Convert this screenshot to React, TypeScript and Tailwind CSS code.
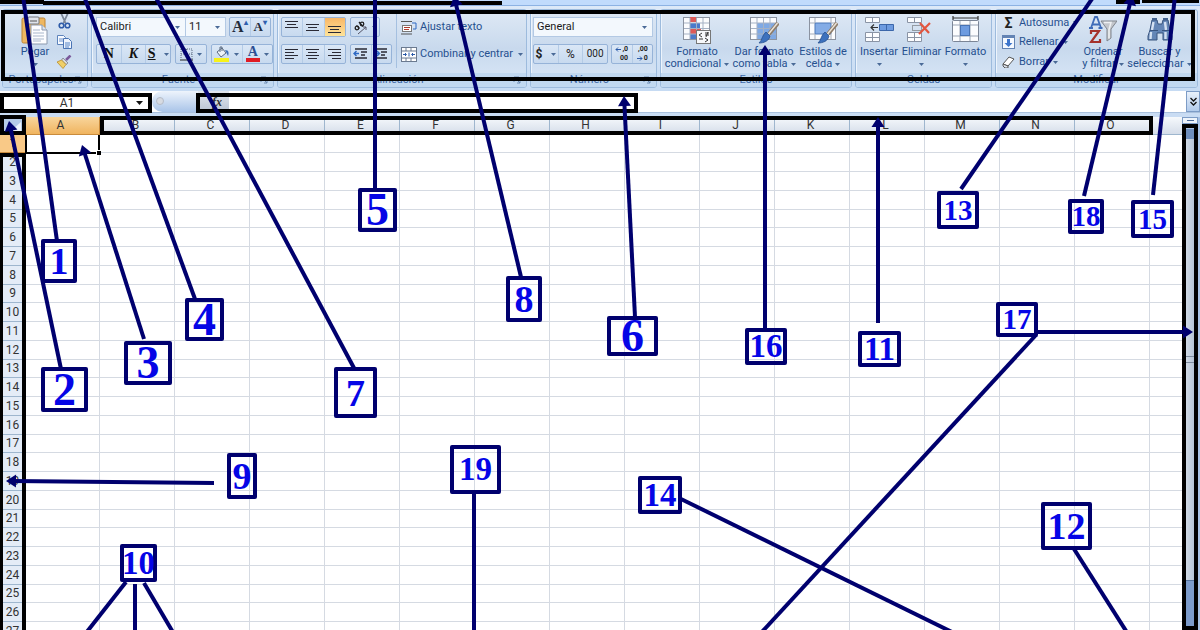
import React from 'react';

const columns = ['A', 'B', 'C', 'D', 'E', 'F', 'G', 'H', 'I', 'J', 'K', 'L', 'M', 'N', 'O'];
const rows = Array.from({ length: 27 }, (_, i) => i + 1);

const INK = '#00006e';

type Line = { x1: number; y1: number; x2: number; y2: number; arrow?: boolean };

const lines: Line[] = [
  { x1: 57, y1: 241, x2: 23, y2: -4 },
  { x1: 61, y1: 369, x2: 9, y2: 121, arrow: true },
  { x1: 144, y1: 339, x2: 82, y2: 145, arrow: true },
  { x1: 195, y1: 299, x2: 84, y2: -4 },
  { x1: 354, y1: 368, x2: 155, y2: -4 },
  { x1: 375, y1: 189, x2: 375, y2: -4 },
  { x1: 521, y1: 277, x2: 454, y2: -4, arrow: true },
  { x1: 635, y1: 317, x2: 624, y2: 96, arrow: true },
  { x1: 765, y1: 329, x2: 765, y2: 45, arrow: true },
  { x1: 878, y1: 323, x2: 878, y2: 117, arrow: true },
  { x1: 961, y1: 189, x2: 1094, y2: -4 },
  { x1: 1084, y1: 196, x2: 1132, y2: -5, arrow: true },
  { x1: 1153, y1: 195, x2: 1175, y2: -4 },
  { x1: 1035, y1: 332, x2: 1193, y2: 332, arrow: true },
  { x1: 1036, y1: 335, x2: 760, y2: 634 },
  { x1: 214, y1: 483, x2: 6, y2: 481, arrow: true },
  { x1: 126, y1: 582, x2: 86, y2: 633 },
  { x1: 135, y1: 584, x2: 135, y2: 634 },
  { x1: 144, y1: 583, x2: 174, y2: 634 },
  { x1: 474, y1: 493, x2: 474, y2: 634 },
  { x1: 681, y1: 499, x2: 956, y2: 634 },
  { x1: 1074, y1: 549, x2: 1128, y2: 634 },
];

const S = 'text-[29px]';
const M = 'text-[33px]';
const L = 'text-[38px]';
const XL = 'text-[46px]';

const callouts = [
  { n: 1, x: 41, y: 239, w: 36, h: 44, size: L },
  { n: 2, x: 41, y: 367, w: 47, h: 45, size: XL },
  { n: 3, x: 124, y: 341, w: 48, h: 44, size: XL },
  { n: 4, x: 185, y: 298, w: 39, h: 43, size: XL },
  { n: 5, x: 358, y: 188, w: 39, h: 44, size: XL },
  { n: 7, x: 334, y: 367, w: 43, h: 51, size: L },
  { n: 8, x: 506, y: 276, w: 36, h: 46, size: L },
  { n: 6, x: 607, y: 316, w: 51, h: 40, size: XL },
  { n: 16, x: 745, y: 328, w: 42, h: 37, size: M },
  { n: 11, x: 858, y: 331, w: 43, h: 36, size: M },
  { n: 13, x: 937, y: 191, w: 42, h: 38, size: S },
  { n: 18, x: 1068, y: 199, w: 36, h: 35, size: S },
  { n: 15, x: 1131, y: 200, w: 43, h: 38, size: S },
  { n: 17, x: 996, y: 302, w: 42, h: 35, size: S },
  { n: 9, x: 227, y: 453, w: 30, h: 46, size: L },
  { n: 10, x: 120, y: 544, w: 37, h: 38, size: M },
  { n: 19, x: 450, y: 445, w: 51, h: 49, size: M },
  { n: 14, x: 638, y: 476, w: 44, h: 38, size: M },
  { n: 12, x: 1041, y: 502, w: 51, h: 48, size: L },
];

function Caret() {
  return (
    <svg width="5" height="3" viewBox="0 0 5 3" className="shrink-0" aria-hidden="true">
      <path d="M0 0h5L2.5 3z" fill="#4a6a97" />
    </svg>
  );
}

function Group({ title, className, launcher, children }: {
  title: string;
  className: string;
  launcher?: boolean;
  children: React.ReactNode;
}) {
  return (
    <section
      aria-label={title}
      className={`flex h-[79px] flex-col overflow-hidden rounded-[3px] border border-[#9dbbdd] bg-linear-to-b from-[#dfe9f5] via-[#c8d9ed] to-[#dae8f8] shadow-[inset_1px_0_0_#edf4fc] ${className}`}
    >
      <div className="flex flex-1 items-start pt-[3px]">{children}</div>
      <div className="flex h-[14px] shrink-0 items-center bg-[#c1d8f0] px-[5px] text-[11px] leading-[14px] text-[#3e6aaa]">
        <span className="flex-1 text-center">{title}</span>
        {launcher && (
          <svg width="8" height="8" viewBox="0 0 8 8" aria-hidden="true">
            <path d="M1 6V1h5M3 3l4 4M7 4v3H4" fill="none" stroke="#6f8db5" />
          </svg>
        )}
      </div>
    </section>
  );
}

// Large ribbon button: picture on top, two text lines below
function BigButton({ icon, line1, line2, className }: {
  icon: React.ReactNode;
  line1: string;
  line2?: string;
  className: string;
}) {
  return (
    <button type="button" className={`flex shrink-0 flex-col items-center whitespace-nowrap text-[11px] leading-[12px] text-[#26508f] ${className}`}>
      <span className="flex h-[33px] items-center">{icon}</span>
      <span>{line1}</span>
      <span className="flex h-[12px] items-center gap-[3px]">
        {line2}
        <Caret />
      </span>
    </button>
  );
}

function ButtonBox({ className, children }: { className?: string; children: React.ReactNode }) {
  return (
    <div className={`flex h-[20px] shrink-0 items-stretch divide-x divide-[#b4cbe6] rounded-[2px] border border-[#96b3d8] bg-linear-to-b from-[#dae7f6] to-[#c8daef] ${className ?? ''}`}>
      {children}
    </div>
  );
}

function IconButton({ label, active, className, children }: {
  label: string;
  active?: boolean;
  className?: string;
  children: React.ReactNode;
}) {
  return (
    <button
      type="button"
      aria-label={label}
      className={`flex flex-1 items-center justify-center gap-1 ${active ? 'bg-linear-to-b from-[#f9b766] to-[#fde39a]' : ''} ${className ?? ''}`}
    >
      {children}
    </button>
  );
}

function Picker({ label, options, className }: { label: string; options: string[]; className: string }) {
  return (
    <div className={`relative h-[20px] shrink-0 border border-[#b3c9e4] bg-[#f3f8fd] ${className}`}>
      <select aria-label={label} className="block h-full w-full appearance-none bg-transparent pl-[3px] text-[11px] leading-[18px] text-[#1b1b1b]">
        {options.map((o) => (
          <option key={o}>{o}</option>
        ))}
      </select>
      <span className="pointer-events-none absolute top-2 right-[5px]">
        <Caret />
      </span>
    </div>
  );
}

function AlignIcon({ bars, y = 1 }: { bars: [number, number][]; y?: number }) {
  return (
    <svg width="14" height="14" viewBox="0 0 14 14" aria-hidden="true">
      {bars.map(([x, w], i) => (
        <rect key={i} x={x} y={y + i * 3} width={w} height="1" fill="#2a2a35" />
      ))}
    </svg>
  );
}

function IndentIcon({ flip }: { flip?: boolean }) {
  return (
    <svg width="16" height="14" viewBox="0 0 16 14" aria-hidden="true">
      <path d="M2 2h12M8 5h6M8 8h4M2 11h12" stroke="#2a2a35" strokeWidth="1.4" />
      <path d={flip ? 'M1 6.5h5M4 4l2.500 2.500L4 9' : 'M6 6.500H1M3.500 4L1 6.500L3.500 9'} fill="none" stroke="#2f6ac4" strokeWidth="1.4" />
    </svg>
  );
}

function DecimalIcon({ less }: { less?: boolean }) {
  return (
    <svg width="6" height="5" viewBox="0 0 6 5" aria-hidden="true">
      <path d={less ? 'M0 2.5h5M3 .5l2 2-2 2' : 'M6 2.5H1M3 .5l-2 2 2 2'} fill="none" stroke="#2b5ba9" />
    </svg>
  );
}

function PasteIcon() {
  return (
    <svg width="28" height="30" viewBox="0 0 28 30" aria-hidden="true">
      <rect x="1" y="3" width="23" height="25" rx="1.500" fill="#eeb761" stroke="#bd8536" />
      <rect x="7" y="2" width="11" height="7" rx="1" fill="#dfe3ea" stroke="#73777f" />
      <path d="M9 6h7" stroke="#555" />
      <path d="M10 10h11l5 5v14H10z" fill="#fdfdff" stroke="#8b98ad" />
      <path d="M21 10v5h5" fill="#dbe4ef" stroke="#8b98ad" />
      <path d="M12 15h7M12 18h11M12 21h11M12 24h11M12 26h8" stroke="#a9b7cb" />
    </svg>
  );
}

function CutIcon() {
  return (
    <svg width="15" height="16" viewBox="0 0 15 16" aria-hidden="true">
      <path d="M4 0l4.500 10M11 0L6.500 10" stroke="#7b8798" strokeWidth="1.800" />
      <circle cx="4.500" cy="12.500" r="2.300" fill="none" stroke="#2d5ba8" strokeWidth="1.600" />
      <circle cx="10.500" cy="12.500" r="2.300" fill="none" stroke="#2d5ba8" strokeWidth="1.600" />
    </svg>
  );
}

function CopyIcon() {
  return (
    <svg width="15" height="14" viewBox="0 0 15 14" aria-hidden="true">
      <path d="M.5.5h6l2 2v7h-8z" fill="#f7faff" stroke="#5d83bb" />
      <path d="M2 4h4M2 6h4" stroke="#6a91cc" />
      <path d="M6.500 3.500h5l3 3v7h-8z" fill="#eef4fd" stroke="#4a74b4" />
      <path d="M8 8h5M8 10h5M8 12h4" stroke="#5784c6" />
    </svg>
  );
}

function BrushIcon() {
  return (
    <svg width="15" height="14" viewBox="0 0 15 14" aria-hidden="true">
      <path d="M13.500.5L9 5" stroke="#7b5a9b" strokeWidth="2.500" />
      <path d="M6 3l5 5-2 1.500L4.500 5z" fill="#d8dbe0" stroke="#7b7f88" strokeWidth=".8" />
      <path d="M4.500 5L9 9.500 6 13.500 0 7z" fill="#f0cf68" stroke="#b98d2b" strokeWidth=".8" />
    </svg>
  );
}

// Shared base for the three style pictures
function TableIcon({ kind }: { kind: 'cond' | 'table' | 'cell' }) {
  return (
    <svg width="29" height="30" viewBox="0 0 29 30" aria-hidden="true">
      <rect x=".5" y="2.500" width="26" height="22" fill="#fbfcfe" stroke="#8b93a1" />
      {kind === 'cond' && (
        <>
          <path d="M7 2h6v5H7zM7 13h11v6H7z" fill="#dc5a58" />
          <path d="M7 8h10v5H7z" fill="#4a7acb" />
          <path d="M7 19h6v5H7z" fill="#4a7acb" />
        </>
      )}
      {kind === 'table' && <path d="M7 8h19v16H7z" fill="#7fa9e4" />}
      {kind === 'cell' && <path d="M6 8h16v11H6z" fill="#84ace6" stroke="#4d79b8" />}
      {kind === 'cell' ? (
        <path d="M6 3v5M22 3v5M6 19v5M22 19v5M1 8h5M1 19h5M22 8h4" stroke="#a5adba" />
      ) : (
        <path d="M7 3v21M13.500 3v21M20 3v21M1 8h25M1 13.500h25M1 19h25" stroke="#a5b1c4" />
      )}
      {kind === 'cond' ? (
        <>
          <rect x="13.500" y="15.500" width="14" height="13" fill="#f7f8fa" stroke="#777" />
          <path d="M19 18l-3 2 3 2M16 24h4M22 18h4M22 20h4M25 17l-2 5M22 23l3 2-3 2" fill="none" stroke="#333" />
        </>
      ) : (
        <>
          <path d="M28 8l-9 11" stroke="#8d7c68" strokeWidth="4" />
          <path d="M27.500 8l-9 11" stroke="#e9e2d8" strokeWidth="1.500" />
          <path d="M16 17l4 4c-1 5-6 7-11 7 3-2 3-8 7-11z" fill="#3d71bd" stroke="#27508f" strokeWidth=".8" />
        </>
      )}
    </svg>
  );
}

function CellsIcon({ kind }: { kind: 'insert' | 'delete' | 'format' }) {
  if (kind === 'format') {
    return (
      <svg width="29" height="30" viewBox="0 0 29 30" aria-hidden="true">
        <path d="M2 3h25M2 1v4M27 1v4" stroke="#333" strokeWidth="1.200" />
        <rect x="1.500" y="5.500" width="26" height="21" rx="1" fill="#fbfcfe" stroke="#7b8596" />
        <path d="M2 10h25M2 21h25M9 6v20M19 6v20" stroke="#9aa5b6" />
        <rect x="9.500" y="10.500" width="9" height="10" fill="#6d9be0" stroke="#4873b4" />
      </svg>
    );
  }
  return (
    <svg width="29" height="30" viewBox="0 0 29 30" aria-hidden="true">
      <path d="M.5 2.500h14v5H.500zM7.500 2.500v5M.5 17.500h14v9H.500zM7.500 17.500v9M.5 22.500h14" fill="#fcfdff" stroke="#8a94a5" />
      {kind === 'insert' ? (
        <>
          <path d="M14.500 9.500h14v6h-14z" fill="#6d9be0" stroke="#3c67aa" />
          <path d="M21.500 9.500v6" stroke="#3c67aa" />
          <path d="M13 12.500H6M9 9.500l-3 3 3 3" fill="none" stroke="#333" strokeWidth="1.200" />
        </>
      ) : (
        <>
          <path d="M5.500 10.500h9v5h-9z" fill="none" stroke="#555" strokeDasharray="1 1" />
          <path d="M13 8l9 10M23 8L12 19" stroke="#e2553f" strokeWidth="2.200" />
        </>
      )}
    </svg>
  );
}

function SortIcon() {
  return (
    <svg width="28" height="30" viewBox="0 0 28 30" aria-hidden="true">
      <path d="M12 6h16l-6 8v9l-4 3V14z" fill="#c3c6cb" stroke="#80858d" />
      <path d="M15 7.500h7l-2 7v9" fill="none" stroke="#eef0f2" strokeWidth="1.500" />
      <path d="M2 13L6 2h2l4 11M4 9.500h6M0 13h4M9.500 13h4" fill="none" stroke="#3f6cb8" strokeWidth="1.800" />
      <path d="M2 19v-3h8L2 27h9v-3" fill="none" stroke="#a5322d" strokeWidth="2.200" />
    </svg>
  );
}

function FindIcon() {
  return (
    <svg width="26" height="28" viewBox="0 0 26 28" aria-hidden="true">
      <path d="M5 4h5l1 4h4l1-4h5l2 10 2 6v4h-9v-7h-6v7H1v-4l2-6z" fill="#6486b6" stroke="#38547f" />
      <path d="M6.500 6L5 14M18 6l1 8M4 16l-.5 7M18.500 16v7" stroke="#d4e1f2" strokeWidth="2.400" />
      <path d="M3 14.500h8M15 14.500h8" stroke="#38547f" />
      <path d="M5 3h5M16 3h5" stroke="#42618e" strokeWidth="2" />
    </svg>
  );
}

function Ribbon() {
  return (
    <div className="flex gap-[3px] border-t border-[#8db2e3] bg-linear-to-b from-[#dde9f8] to-[#c6dbf3] px-[2px] pt-[3px] pb-[3px]">
      <Group title="Portapapeles" launcher className="w-[86px] shrink-0">
        <BigButton icon={<PasteIcon />} line1="Pegar" className="ml-[12px] w-[40px]" />
        <div className="flex flex-col items-center gap-[6px] pl-[2px]">
          <button type="button" aria-label="Cortar"><CutIcon /></button>
          <button type="button" aria-label="Copiar"><CopyIcon /></button>
          <button type="button" aria-label="Copiar formato"><BrushIcon /></button>
        </div>
      </Group>

      <Group title="Fuente" launcher className="w-[183px] shrink-0">
        <div className="flex flex-col gap-[7px] pt-[4px] pl-[4px]">
          <div className="flex">
            <Picker label="Fuente" options={['Calibri', 'Arial', 'Cambria']} className="w-[90px]" />
            <Picker label="Tamaño de fuente" options={['11', '12', '14']} className="w-[40px] border-l-0" />
            <ButtonBox className="ml-[3px] w-[42px]">
              <IconButton label="Aumentar tamaño" className="font-['Liberation_Serif',serif] text-[16px] leading-[18px] font-bold text-[#222c3c]">
                A<sup className="-ml-1 text-[8px] text-[#2f5fae]">▴</sup>
              </IconButton>
              <IconButton label="Disminuir tamaño" className="font-['Liberation_Serif',serif] text-[13px] leading-[18px] font-bold text-[#222c3c]">
                A<sup className="-ml-1 text-[8px] text-[#2f5fae]">▾</sup>
              </IconButton>
            </ButtonBox>
          </div>
          <div className="flex gap-[4px] font-['Liberation_Serif',serif] text-[14px] leading-[18px] font-bold text-[#111]">
            <ButtonBox className="w-[75px]">
              <IconButton label="Negrita">N</IconButton>
              <IconButton label="Cursiva"><i>K</i></IconButton>
              <IconButton label="Subrayado" className="gap-[8px]"><u>S</u><Caret /></IconButton>
            </ButtonBox>
            <ButtonBox className="w-[32px]">
              <IconButton label="Bordes">
                <svg width="13" height="13" viewBox="0 0 13 13" aria-hidden="true">
                  <path d="M1 1h11v10M1 1v10M6.500 1v10M1 6h11" fill="none" stroke="#5b6b80" strokeDasharray="1 1" />
                  <path d="M0 12h13" stroke="#222" />
                </svg>
                <Caret />
              </IconButton>
            </ButtonBox>
            <ButtonBox className="w-[62px]">
              <IconButton label="Color de relleno">
                <svg width="16" height="16" viewBox="0 0 16 16" aria-hidden="true">
                  <path d="M3 6l5-4 4 5-5 4z" fill="#eef2f7" stroke="#5b6b80" />
                  <path d="M6 6V1h2v4" fill="none" stroke="#5b6b80" />
                  <path d="M11 4c4 0 4 3 3 6l-2-4z" fill="#3e6fb8" />
                  <rect y="12" width="15" height="4" fill="#f7f21a" />
                </svg>
                <Caret />
              </IconButton>
              <IconButton label="Color de fuente">
                <span className="border-b-4 border-[#e01b24] px-[2px] text-[14px] leading-[12px] text-[#2d4f93]">A</span>
                <Caret />
              </IconButton>
            </ButtonBox>
          </div>
        </div>
      </Group>

      <Group title="Alineación" launcher className="w-[250px] shrink-0">
        <div className="flex flex-col gap-[7px] pt-[4px] pl-[3px]">
          <div className="flex gap-[4px]">
            <ButtonBox className="w-[65px]">
              <IconButton label="Alinear arriba"><AlignIcon y={1} bars={[[0, 13], [2, 9], [0, 13]]} /></IconButton>
              <IconButton label="Alinear al medio"><AlignIcon y={4} bars={[[0, 13], [2, 9], [0, 13]]} /></IconButton>
              <IconButton label="Alinear abajo" active><AlignIcon y={6} bars={[[0, 13], [2, 9], [0, 13]]} /></IconButton>
            </ButtonBox>
            <ButtonBox className="w-[30px]">
              <IconButton label="Orientación">
                {/* slanted letters above a diagonal arrow */}
                <svg width="15" height="15" viewBox="0 0 15 15" aria-hidden="true">
                  <circle cx="4" cy="8" r="1.800" fill="none" stroke="#222" strokeWidth="1.300" />
                  <path d="M3.500 5.500l3 3M6 2l4 4.500" fill="none" stroke="#222" strokeWidth="1.300" />
                  <circle cx="9" cy="4" r="1.800" fill="none" stroke="#222" strokeWidth="1.300" />
                  <path d="M5 14l8-7M10 7h3v3" fill="none" stroke="#556" />
                </svg>
                <Caret />
              </IconButton>
            </ButtonBox>
          </div>
          <div className="flex gap-[4px]">
            <ButtonBox className="w-[65px]">
              <IconButton label="Alinear a la izquierda"><AlignIcon y={2} bars={[[0, 13], [0, 9], [0, 13], [0, 9]]} /></IconButton>
              <IconButton label="Centrar"><AlignIcon y={2} bars={[[0, 13], [2, 9], [0, 13], [2, 9]]} /></IconButton>
              <IconButton label="Alinear a la derecha"><AlignIcon y={2} bars={[[0, 13], [4, 9], [0, 13], [4, 9]]} /></IconButton>
            </ButtonBox>
            <ButtonBox className="w-[42px]">
              <IconButton label="Disminuir sangría"><IndentIcon /></IconButton>
              <IconButton label="Aumentar sangría"><IndentIcon flip /></IconButton>
            </ButtonBox>
          </div>
        </div>
        <div className="ml-[4px] flex h-[55px] flex-col gap-[7px] border-l border-[#a5c0e0] pt-[4px] pl-[4px] text-[11px] leading-[20px] whitespace-nowrap text-[#26508f]">
          <button type="button" className="flex h-[20px] items-center gap-[3px]">
            <svg width="16" height="15" viewBox="0 0 16 15" aria-hidden="true">
              <path d="M0 1.500h11M0 14h11" stroke="#555" strokeWidth="1.200" />
              <rect x="1.500" y="5.500" width="9" height="6" fill="#fff" stroke="#777" />
              <path d="M3 7.500h6M3 9.500h5" stroke="#b03b2f" />
              <path d="M11 3h4v6h-3" fill="none" stroke="#2f6ac4" />
            </svg>
            Ajustar texto
          </button>
          <button type="button" className="flex h-[20px] items-center gap-[3px]">
            <svg width="16" height="15" viewBox="0 0 16 15" aria-hidden="true">
              <rect x=".5" y=".5" width="15" height="14" fill="#fff" stroke="#6b7a90" />
              <path d="M1 4h14M1 11h14M5 1v3M10 1v3M5 11v3M10 11v3" stroke="#6b7a90" />
              <path d="M2 7.500h3M14 7.500h-3M4 6l1.500 1.500L4 9M12 6l-1.500 1.500L12 9M8 5.500v4" fill="none" stroke="#2b5ba9" />
            </svg>
            Combinar y centrar
            <span className="pl-[2px]"><Caret /></span>
          </button>
        </div>
      </Group>

      <Group title="Número" launcher className="w-[127px] shrink-0">
        <div className="flex flex-col gap-[7px] pt-[4px] pl-[2px]">
          <Picker label="Formato de número" options={['General', 'Número', 'Moneda']} className="w-[120px]" />
          <div className="flex gap-[3px] text-[12px] leading-[18px] text-[#222]">
            <ButtonBox className="w-[75px]">
              <IconButton label="Moneda" className="gap-[9px] font-bold">$<Caret /></IconButton>
              <IconButton label="Porcentaje">%</IconButton>
              <IconButton label="Millares" className="text-[10px]">000</IconButton>
            </ButtonBox>
            <ButtonBox className="w-[42px] text-[7px] leading-[9px] font-bold">
              <IconButton label="Aumentar decimales">
                <span className="flex flex-col items-end">
                  <span className="flex items-center gap-px"><DecimalIcon />,0</span>
                  <span>00</span>
                </span>
              </IconButton>
              <IconButton label="Disminuir decimales">
                <span className="flex flex-col items-end">
                  <span>,00</span>
                  <span className="flex items-center gap-px"><DecimalIcon less />0</span>
                </span>
              </IconButton>
            </ButtonBox>
          </div>
        </div>
      </Group>

      <Group title="Estilos" className="w-[192px] shrink-0">
        <BigButton icon={<TableIcon kind="cond" />} line1="Formato" line2="condicional" className="ml-[2px] w-[68px]" />
        <BigButton icon={<TableIcon kind="table" />} line1="Dar formato" line2="como tabla" className="w-[66px]" />
        <BigButton icon={<TableIcon kind="cell" />} line1="Estilos de" line2="celda" className="w-[52px]" />
      </Group>

      <Group title="Celdas" className="w-[137px] shrink-0">
        <BigButton icon={<CellsIcon kind="insert" />} line1="Insertar" className="ml-[2px] w-[42px]" />
        <BigButton icon={<CellsIcon kind="delete" />} line1="Eliminar" className="w-[43px]" />
        <BigButton icon={<CellsIcon kind="format" />} line1="Formato" className="w-[45px]" />
      </Group>

      <Group title="Modificar" className="min-w-[200px] flex-1">
        <div className="flex w-[80px] shrink-0 flex-col pl-[6px] text-[11px] leading-[20px] whitespace-nowrap text-[#26508f]">
          <button type="button" className="flex h-[19px] items-center gap-[4px]">
            <span className="w-[13px] shrink-0 text-[14px] font-bold text-[#222]">Σ</span>
            Autosuma
            <Caret />
          </button>
          <button type="button" className="flex h-[20px] items-center gap-[4px]">
            <svg width="13" height="14" viewBox="0 0 13 14" aria-hidden="true">
              <rect x=".5" y=".5" width="12" height="13" fill="#f5f9ff" stroke="#6283b4" />
              <path d="M1 2h11" stroke="#6283b4" strokeWidth="2" />
              <path d="M5 4h3v4h2.500l-4 4-4-4H5z" fill="#3d75cc" />
            </svg>
            Rellenar
            <Caret />
          </button>
          <button type="button" className="flex h-[20px] items-center gap-[4px]">
            <svg width="13" height="12" viewBox="0 0 13 12" aria-hidden="true">
              <path d="M1 8l6-7 5 2-6 7z" fill="#fff" stroke="#555" />
              <path d="M1 8l5 2v2H3L1 10z" fill="#dadfe8" stroke="#555" />
            </svg>
            Borrar
            <Caret />
          </button>
        </div>
        <BigButton icon={<SortIcon />} line1="Ordenar" line2="y filtrar" className="ml-[2px] w-[50px]" />
        <BigButton icon={<FindIcon />} line1="Buscar y" line2="seleccionar" className="w-[63px]" />
      </Group>
    </div>
  );
}

function FormulaBar() {
  return (
    <div className="flex h-[22px] items-stretch border-b border-[#a9c0dd] bg-white">
      <div className="flex w-[152px] shrink-0 items-center pt-[2px] pr-[9px] pl-[4px]">
        <input
          aria-label="Cuadro de nombres"
          defaultValue="A1"
          className="w-full min-w-0 bg-transparent pr-[6px] text-center text-[12px] leading-[16px] text-[#333]"
        />
        <svg width="7" height="4" viewBox="0 0 7 4" className="shrink-0" aria-hidden="true">
          <path d="M0 0h7L3.500 4z" fill="#111" />
        </svg>
      </div>
      <div className="flex w-[46px] shrink-0 items-start rounded-l-full bg-linear-to-b from-[#eef4fc] to-[#a9c4e8] pt-[6px] pl-[4px]">
        <span className="size-[8px] rounded-full border border-[#b5bcc8] bg-[#d7dbe2]" />
      </div>
      <button type="button" className="w-[31px] shrink-0 bg-linear-to-b from-[#e3e7ee] to-[#b9c3d3] pl-[7px] font-['Liberation_Serif',serif] text-[12px] font-bold text-[#333] italic">
        fx
      </button>
      <input aria-label="Barra de fórmulas" className="min-w-0 flex-1 px-1 text-[12px]" />
      <button type="button" aria-label="Expandir barra de fórmulas" className="flex w-[14px] shrink-0 items-center justify-center border border-[#7d9cc6] bg-linear-to-b from-[#e9f1fb] to-[#b2cbeb]">
        <svg width="7" height="9" viewBox="0 0 7 9" aria-hidden="true">
          <path d="M.5 1l3 3 3-3M.5 5l3 3 3-3" fill="none" stroke="#111" strokeWidth="1.300" />
        </svg>
      </button>
    </div>
  );
}

function Sheet() {
  return (
    <table className="w-full table-fixed border-separate border-spacing-0 bg-white text-[12px] leading-[17px] text-[#333]">
      <thead>
        <tr className="h-[18px]">
          <th className="w-[25px] bg-[#b5cbe8] p-0" aria-label="Seleccionar todo">
            <svg width="10" height="9" viewBox="0 0 10 9" className="ml-[11px]" aria-hidden="true">
              <path d="M10 0v9H0z" fill="#eef4fb" />
            </svg>
          </th>
          {columns.map((c) => (
            <th
              key={c}
              scope="col"
              className={`w-[75px] border-r border-b p-0 pr-[3px] font-normal ${c === 'A' ? 'border-[#c98b3c] bg-linear-to-b from-[#f8d59b] to-[#f0b45e]' : 'border-[#9eb6ce] bg-linear-to-b from-[#f6f9fc] to-[#d5dde9]'}`}
            >
              {c}
            </th>
          ))}
          <th className="border-b border-[#9eb6ce] bg-linear-to-b from-[#f6f9fc] to-[#d5dde9] p-0" />
        </tr>
      </thead>
      <tbody>
        {rows.map((r) => (
          <tr key={r} className="h-[19px] nth-[4n+1]:h-[18px]">
            <th
              scope="row"
              className={`border-b p-0 text-center font-normal ${r === 1 ? 'border-[#c98b3c] bg-[#f9c987]' : 'border-[#9eb6ce] bg-[#e4ecf7]'}`}
            >
              {r}
            </th>
            {columns.map((c) => (
              <td key={c} className="border-r border-b border-[#d5dae2] p-0" />
            ))}
            <td className="border-b border-[#d5dae2] p-0" />
          </tr>
        ))}
      </tbody>
    </table>
  );
}

function ScrollBar() {
  return (
    <div className="flex w-[18px] shrink-0 flex-col bg-[#a9c3e6] pr-[2px]">
      <div className="flex h-[7px] items-center justify-center border border-[#7d9cc6] bg-[#eef4fb]">
        <span className="h-px w-[7px] bg-[#4b6a98]" />
      </div>
      <div className="mt-[5px] h-[10px] bg-[#6f8fbd]" />
      <div className="flex flex-[450] items-center justify-center bg-linear-to-r from-[#dfe7f0] to-[#a9b9cd]">
        <span className="h-[7px] w-[8px] border-y border-[#7f8da0]" />
      </div>
      <div className="flex-[50] border-t border-[#55749f] bg-[#7d9ccb]" />
    </div>
  );
}

function ArrowLine({ x1, y1, x2, y2, arrow }: Line) {
  const angle = (Math.atan2(y2 - y1, x2 - x1) * 180) / Math.PI;
  return (
    <g>
      <line x1={x1} y1={y1} x2={x2} y2={y2} stroke={INK} strokeWidth="4" strokeDasharray={arrow ? `${Math.hypot(x2 - x1, y2 - y1) - 5} 9` : undefined} />
      {arrow && <path d="M0 0L-10 -6.500V6.500z" fill={INK} transform={`translate(${x2} ${y2}) rotate(${angle})`} />}
    </g>
  );
}

// Frames, arrows and numbers drawn on top of the window
function Annotations() {
  return (
    <div className="pointer-events-none absolute inset-0 overflow-hidden">
      <div className="absolute top-0 left-0 h-[4px] w-[44px] bg-black" />
      <div className="absolute top-[1px] left-[43px] h-[4px] w-[459px] bg-black" />
      <div className="absolute top-0 right-[60px] h-[4px] w-[24px] bg-black" />
      <div className="absolute top-0 right-px h-[3px] w-[57px] bg-black" />
      <div className="absolute top-[10px] right-[5px] left-px h-[71px] border-4 border-black" />
      <div className="absolute top-[93px] left-0 h-[20px] w-[152px] border-4 border-black" />
      <div className="absolute top-[93px] left-[196px] h-[20px] w-[442px] border-4 border-black" />
      <div className="absolute top-[115px] left-0 h-[20px] w-[26px] border-4 border-black" />
      <div className="absolute top-[116px] left-[100px] h-[19px] w-[1053px] border-4 border-black" />
      <div className="absolute top-[135px] left-[25px] h-[19px] w-[75px] border-2 border-t-0 border-black">
        <span className="absolute -right-[3px] -bottom-[3px] size-[5px] border-t border-l border-white bg-black" />
      </div>
      <div className="absolute top-[153px] -bottom-1 -left-px w-[27px] border-4 border-black" />
      <div className="absolute top-[124px] right-[2px] bottom-0 w-[16px] border-4 border-black" />

      <svg className="absolute inset-0 h-full w-full" aria-hidden="true">
        {lines.map((l, i) => (
          <ArrowLine key={i} {...l} />
        ))}
      </svg>

      {callouts.map(({ n, x, y, w, h, size }) => (
        <div
          key={n}
          className={`absolute flex items-center justify-center rounded-[2px] border-4 border-[#00006e] font-['Liberation_Serif',serif] leading-none font-bold text-[#0505e6] ${size}`}
          style={{ left: x, top: y, width: w, height: h }}
        >
          {n}
        </div>
      ))}
    </div>
  );
}

export default function App() {
  return (
    <div className="relative flex h-screen flex-col overflow-hidden bg-[#bfd8f8] font-[Roboto,'Noto_Sans',sans-serif]">
      <div className="h-[5px] shrink-0 bg-[#c1dbfc]" />
      <Ribbon />
      <FormulaBar />
      <div className="h-[4px] shrink-0 bg-[#c9dcf3]" />
      <div className="flex min-h-0 flex-1">
        <div className="min-w-0 flex-1 overflow-hidden">
          <Sheet />
        </div>
        <ScrollBar />
      </div>
      <Annotations />
    </div>
  );
}
